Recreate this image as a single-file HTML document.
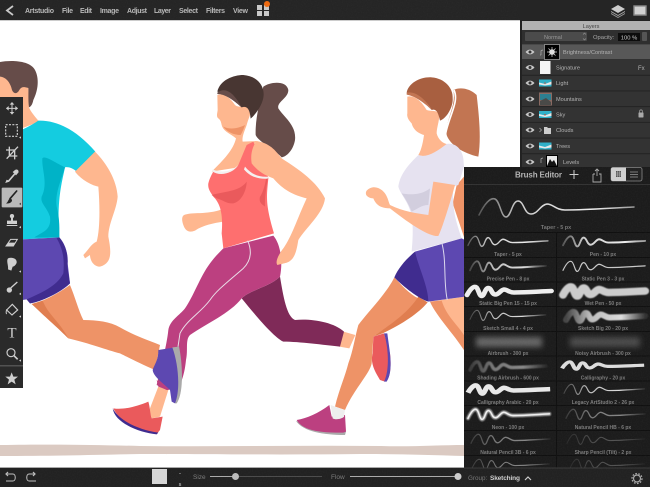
<!DOCTYPE html>
<html><head><meta charset="utf-8"><style>
html,body{margin:0;padding:0;background:#fff;width:650px;height:487px;overflow:hidden}
svg{display:block}
text{font-family:"Liberation Sans",sans-serif}
</style></head><body>
<svg width="650" height="487" viewBox="0 0 650 487" xmlns="http://www.w3.org/2000/svg">
<defs>
<filter id="noise" x="0" y="0" width="100%" height="100%"><feTurbulence type="fractalNoise" baseFrequency="0.8" numOctaves="2" seed="4"/><feColorMatrix values="0 0 0 0 1 0 0 0 0 1 0 0 0 0 1 0.5 0 0 0 -0.2"/></filter>
<filter id="b1" x="-10%" y="-60%" width="120%" height="220%"><feGaussianBlur stdDeviation="0.9"/></filter>
<filter id="b2" x="-20%" y="-150%" width="140%" height="400%"><feGaussianBlur stdDeviation="3"/></filter>
<linearGradient id="g1"><stop offset="0" stop-color="#555"/><stop offset=".25" stop-color="#ccc"/><stop offset=".75" stop-color="#eee"/><stop offset="1" stop-color="#999"/></linearGradient>
<linearGradient id="g2"><stop offset="0" stop-color="#444"/><stop offset=".3" stop-color="#bbb"/><stop offset=".7" stop-color="#ddd"/><stop offset="1" stop-color="#333"/></linearGradient>
<linearGradient id="g3"><stop offset="0" stop-color="#3a3a3a"/><stop offset=".3" stop-color="#777"/><stop offset=".7" stop-color="#888"/><stop offset="1" stop-color="#2a2a2a"/></linearGradient>
<linearGradient id="g4"><stop offset="0" stop-color="#2c2c2c"/><stop offset=".3" stop-color="#4c4c4c"/><stop offset=".7" stop-color="#555"/><stop offset="1" stop-color="#252525"/></linearGradient>
<path id="w" fill="none" stroke-linejoin="round" d="M0 6C5-4 11-12 16-10C21-8 22 8 27 8C32 8 33-8 39-8C45-8 45 5 52 5C59 5 61-4 68-5C74-5 77 1 86 1C111 1 131-1 155-2"/>
<g id="eye"><path d="M-4.5 0C-2 -3.2 2 -3.2 4.500 0C2 3.200-2 3.200-4.500 0Z" fill="#c8c8c8"/><circle r="1.500" fill="#333"/></g>
<g id="sky"><rect width="12.500" height="7" fill="#30b0c8"/><path d="M0 3L6 4.500L12.500 2V5L6 6L0 5Z" fill="#e8e8e8"/><path d="M5 3L7 3L6 5Z" fill="#b05a4a"/></g>
</defs>

<rect width="650" height="487" fill="#fff"/>

<!-- ground -->
<path d="M0 445C60 444 100 445 140 446C220 447 300 445 380 446C410 447 440 445 464 445V456C430 455 400 454 360 454C280 455 200 454 140 454C90 455 50 456 0 456Z" fill="#dbcac2"/>

<!-- Runner 1 -->
<g transform="translate(0 90) scale(.33333)">
<path d="M0-40L30-35L85-6L87 52C92 65 105 80 118 95L0 140Z" fill="#feb78f"/>
<path d="M0-84C30-90 90-90 105-60C118-35 115 0 100 30C97 45 92 50 87 52C84 30 86 5 85-6C70-10 65-10 58 0C50 15 40 10 36 0C34-10 25-38 0-40Z" fill="#664c49"/>
<path d="M0 135C40 135 80 115 115 92C170 90 230 120 286 185L230 245C218 234 205 230 195 232C185 280 170 330 178 442L0 452Z" fill="#14cce0"/>
<path d="M127 205C135 195 165 218 195 232C180 280 165 310 170 350C180 390 178 420 178 442L103 442C130 425 155 420 150 380C140 350 120 340 125 320C145 280 125 240 127 205Z" fill="#00b3c7"/>
<path d="M285 185C320 220 350 270 353 320C350 360 325 400 325 440C335 490 335 520 300 530C280 530 270 510 270 495L255 505L250 495C265 480 275 460 290 455C300 420 300 350 295 290C270 285 240 265 225 245Z" fill="#feb78f"/>
<path d="M95 642C130 635 175 610 210 585C225 620 235 660 250 690C290 690 330 695 360 712C400 735 430 745 480 765L465 840C420 820 380 800 360 790C320 780 270 760 205 745C180 720 150 690 95 642Z" fill="#ee9367"/>
<path d="M95 642L128 632C145 675 175 690 205 745C175 715 145 690 95 642Z" fill="#e07e50"/>
<path d="M0 452L178 442C195 460 205 490 203 520L210 580C180 610 130 630 90 640L80 628L0 640Z" fill="#5d48b1"/>
<path d="M170 445L178 442C200 470 205 500 202 530L210 580C175 610 125 635 90 640L80 628C120 610 170 590 190 550C195 500 185 470 170 445Z" fill="#402c8f"/>
</g>

<!-- Runner 2 -->
<g transform="translate(110 70) scale(.33333)">
<path d="M460 50C480 35 530 30 535 60C535 85 500 95 505 115C520 140 560 165 555 210C550 240 530 260 515 262C490 235 445 215 437 195C435 150 450 90 460 50Z" fill="#664c49"/>
<path d="M145 950L118 1020L125 1045L150 1040L175 960Z" fill="#feb78f"/>
<path d="M690 782L736 795L718 835L688 830Z" fill="#feb78f"/>
<path d="M510 620C520 680 530 740 555 750C600 745 670 755 702 785L690 830C640 825 570 815 520 815C490 800 440 740 395 685C420 660 480 650 510 620Z" fill="#7f2a58"/>
<path d="M222 435C245 425 290 435 335 418L340 455C310 460 280 465 255 482C235 490 225 480 220 465C215 450 215 440 222 435Z" fill="#feb78f"/>
<path d="M322 75C335 70 355 75 375 105C385 115 410 105 420 115C425 130 415 145 410 165C405 180 395 200 398 215L440 213C420 240 400 270 385 292L305 305C340 270 370 240 378 205C360 190 340 185 335 165C332 150 330 150 325 145C318 140 322 130 323 120Z" fill="#feb78f"/>
<path d="M340 170C360 180 385 175 405 165C400 180 395 190 392 195C370 195 350 185 340 170Z" fill="#ee9367"/>
<path d="M295 340C300 320 308 310 312 300C335 312 370 305 385 285L410 225L430 215L470 300L475 325C470 380 465 400 492 490L340 535L335 490C340 430 330 400 310 380C300 365 293 355 295 340Z" fill="#fe6f6f"/>
<path d="M305 375C340 365 390 365 410 335C410 360 395 395 370 400C350 402 340 390 320 385Z" fill="#ea5a5c"/>
<path d="M468 325C465 350 455 375 450 380C445 400 460 405 465 410C463 385 470 350 473 325Z" fill="#ea5a5c"/>
<path d="M308 298C335 310 365 305 385 285C370 310 330 320 308 305ZM405 290C425 315 450 322 475 320L473 326C445 328 420 320 402 298Z" fill="#f4f0f0"/>
<path d="M440 213C480 220 495 240 515 265C570 300 620 335 645 385C640 430 590 470 565 510C560 540 555 570 530 578L502 585C495 575 505 555 520 535C545 500 560 450 590 385C550 375 520 360 490 325C460 315 440 300 425 280C420 250 430 225 440 213Z" fill="#feb78f"/>
<path d="M340 535L490 497C510 520 520 570 510 620C480 650 420 660 395 685C360 730 290 760 240 795C225 810 235 840 228 870C225 900 220 920 210 945L170 960L140 945C150 900 170 830 175 780C180 750 210 735 225 715C250 680 270 620 300 580C315 560 330 545 340 535Z" fill="#bc4080"/>
<path d="M502 585C495 575 505 555 520 535L530 578Z" fill="#feb78f"/>
<path d="M413 512C425 540 425 570 400 595C360 630 320 660 300 690C270 730 230 750 210 790L204 830" fill="none" stroke="#eadfe8" stroke-width="3"/>
<path d="M322 65C330 30 370 15 400 15C440 18 462 45 461 75C460 100 440 130 422 146C420 125 415 105 395 112C370 90 345 70 322 65Z" fill="#483632"/>
<path d="M322 68C345 50 370 65 395 112C370 90 345 72 322 72Z" fill="#664c49"/>
<path d="M0 765C40 780 70 820 145 845L130 892C90 870 40 850 0 840Z" fill="#ee9367"/>
<path d="M145 840L195 832L212 920C215 960 210 990 195 1000L185 995L180 960C160 940 130 920 128 900C135 880 145 870 145 840Z" fill="#5d48b1"/>
<path d="M187 832L207 830C218 880 222 970 200 1000L195 1000C212 960 205 880 187 832Z" fill="#aaa"/>
<path d="M140 930C155 950 170 955 180 960L172 960L145 950Z" fill="#bc4080"/>
<path d="M10 1015C40 1020 80 1010 115 995C120 1010 120 1030 125 1045L158 1040L150 1080L140 1092C100 1085 30 1060 10 1015Z" fill="#ea5a5c"/>
<path d="M8 1015C30 1055 90 1080 145 1088L140 1093C90 1088 15 1060 8 1015Z" fill="#402c8f"/>
</g>

<!-- Runner 3 -->
<g transform="translate(290 70) scale(.33333)">
<path d="M490 60C510 50 540 55 560 75C565 120 575 200 565 260C520 250 480 225 470 195C465 150 500 110 490 60Z" fill="#c27552"/>
<path d="M522 320L500 345L488 400L515 480L525 510V320Z" fill="#ee9367"/>
<path d="M420 695L525 680V842C490 790 440 740 420 695Z" fill="#feb78f"/>
<path d="M455 692C470 740 500 760 525 800V845C490 790 440 740 420 695Z" fill="#ee9367"/>
<path d="M250 800L282 790L300 850C305 890 300 930 285 935L270 930C255 905 240 880 248 850Z" fill="#ea5a5c"/>
<path d="M282 790L292 790C298 840 312 900 290 935L282 935C300 900 295 830 282 790Z" fill="#5d48b1"/>
<path d="M313 622C290 670 230 730 205 765C195 800 190 840 175 880C165 920 145 965 135 1010L165 1020C190 960 240 910 245 880L250 800C290 770 350 740 385 685C355 670 335 645 313 622Z" fill="#ee9367"/>
<path d="M385 680L413 697C385 730 340 760 278 790L250 800C290 770 350 735 385 680Z" fill="#e07e50"/>
<path d="M352 80C375 75 395 95 410 120C425 125 440 120 447 130C450 150 440 170 440 190C445 210 460 220 470 222C450 250 410 265 385 255C395 240 400 210 402 195C385 190 370 180 365 160C355 150 350 140 352 130Z" fill="#feb78f"/>
<path d="M385 255C410 265 440 245 470 222C495 218 515 235 520 265L522 290L505 345L490 350C485 420 500 460 515 505L365 545C370 490 370 450 360 420C350 390 330 370 325 350C330 310 360 280 385 255Z" fill="#e6e2f0"/>
<path d="M335 370C360 375 395 375 420 355L415 405C395 405 385 415 365 425C355 400 345 385 335 370Z" fill="#d2cede"/>
<path d="M430 335L495 345C480 400 455 480 445 498C420 500 370 470 300 415C280 415 260 410 250 385C235 385 222 375 230 362C245 345 270 350 285 370C295 385 295 395 300 405C340 425 380 430 415 435C420 400 425 365 430 335Z" fill="#feb78f"/>
<path d="M375 545L515 505L525 510V680L415 695C405 650 370 590 375 545Z" fill="#5d48b1"/>
<path d="M375 545C345 570 325 595 313 622C340 650 385 685 415 695C415 650 385 590 375 545Z" fill="#402c8f"/>
<path d="M455 517C470 570 460 640 472 690" fill="none" stroke="#dcd8ee" stroke-width="3"/>
<path d="M492 60C508 95 478 135 467 190" fill="none" stroke="#fff" stroke-width="5"/>
<path d="M350 68C355 40 390 20 425 22C465 25 490 55 488 85C490 110 470 145 450 152C445 130 440 115 425 120C405 85 375 70 350 68Z" fill="#a85f40"/>
<path d="M350 68C375 62 405 85 425 120C405 100 375 78 350 74Z" fill="#c27552"/>
<path d="M18 1053C40 1085 100 1095 165 1095L168 1085L100 1075Z" fill="#aaa"/>
<path d="M20 1050C50 1045 85 1030 118 1005L125 1040L165 1035L168 1085L160 1088C100 1088 40 1085 20 1050Z" fill="#bc4080"/>
<path d="M122 1005L165 1020L162 1040C155 1048 135 1050 128 1045Z" fill="#eee"/>
</g>

<!-- Top bar -->
<rect width="650" height="20" fill="#252525"/>
<rect y="20" width="520" height="1" fill="#ccc"/>
<path d="M13 6L7 10.500L13 15" fill="none" stroke="#c8c8c8" stroke-width="1.800"/>
<g font-size="7" font-weight="bold" fill="#b8b8b8">
<text x="25" y="13" textLength="29">Artstudio</text>
<text x="62" y="13" textLength="11">File</text>
<text x="80" y="13" textLength="12">Edit</text>
<text x="100" y="13" textLength="19">Image</text>
<text x="127" y="13" textLength="20">Adjust</text>
<text x="154" y="13" textLength="17">Layer</text>
<text x="179" y="13" textLength="19">Select</text>
<text x="206" y="13" textLength="19">Filters</text>
<text x="233" y="13" textLength="15">View</text>
</g>
<g fill="#c8c8c8"><rect x="257" y="5" width="5" height="5"/><rect x="264" y="5" width="5" height="5"/><rect x="257" y="11" width="5" height="5"/><rect x="264" y="11" width="5" height="5"/></g>
<circle cx="267" cy="4" r="3" fill="#ee6a10"/>
<path d="M618 5L625 9L618 13L611 9Z" fill="#ccc"/><path d="M611 11L618 15L625 11V12L618 16L611 12Z" fill="#aaa"/><path d="M611 13L618 17L625 13V14L618 18L611 14Z" fill="#999"/>
<rect x="634" y="6" width="12" height="9" fill="#d0d0d0" stroke="#8a8a8a" stroke-width="1.400"/>

<!-- Right dark panel -->
<rect x="520" y="20" width="130" height="150" fill="#222"/>
<rect x="522" y="21" width="128" height="9" fill="#b2b2b2"/>
<text x="591" y="28" font-size="5.600" text-anchor="middle" fill="#444">Layers</text>
<rect x="522" y="30" width="128" height="14" fill="#2f2f2f"/>
<rect x="525" y="32" width="62" height="9" rx="1" fill="#4b4b4b"/>
<text x="553" y="39" font-size="5.600" text-anchor="middle" fill="#999">Normal</text>
<path d="M583 34.500L584.500 33L586 34.500M583 38.500L584.500 40L586 38.500" fill="none" stroke="#999" stroke-width=".6"/>
<text x="593" y="39" font-size="5.800" fill="#aaa">Opacity:</text>
<rect x="618" y="33" width="22" height="8" fill="#0c0c0c"/>
<text x="629" y="39.500" font-size="5.800" text-anchor="middle" fill="#ccc">100 %</text>
<rect x="642" y="32" width="5" height="9" rx="1" fill="#555"/>
<g fill="#333">
<rect x="522" y="60" width="128" height="14.800"/><rect x="522" y="75.700" width="128" height="14.800"/><rect x="522" y="91.400" width="128" height="14.800"/><rect x="522" y="107.100" width="128" height="14.800"/><rect x="522" y="122.800" width="128" height="14.800"/><rect x="522" y="138.500" width="128" height="14.800"/><rect x="522" y="154.200" width="128" height="14"/>
</g>
<rect x="522" y="44.300" width="128" height="15" fill="#585858"/>
<g><use href="#eye" x="530" y="52"/><use href="#eye" x="530" y="67.500"/><use href="#eye" x="530" y="83"/><use href="#eye" x="530" y="99"/><use href="#eye" x="530" y="114.500"/><use href="#eye" x="530" y="130"/><use href="#eye" x="530" y="146"/><use href="#eye" x="530" y="162"/></g>
<g font-size="5.600" fill="#b4b4b4">
<text x="563" y="54">Brightness/Contrast</text><text x="556" y="69.500">Signature</text><text x="556" y="85">Light</text><text x="556" y="101">Mountains</text><text x="556" y="116.500">Sky</text><text x="556" y="132">Clouds</text><text x="556" y="148">Trees</text><text x="563" y="164">Levels</text>
<text x="638" y="70" font-size="6">Fx</text>
</g>
<path d="M541 50.500V55M541 50.500L543 50M541 55H540" stroke="#aaa" stroke-width=".7" fill="none"/>
<rect x="544.500" y="44.500" width="15" height="15" fill="#000" stroke="#999" stroke-width=".8"/>
<circle cx="552" cy="52" r="2.800" fill="#ddd"/><path d="M552 47V57M547 52H557M548.500 48.500L555.500 55.500M555.500 48.500L548.500 55.500" stroke="#ddd" stroke-width=".7"/>
<rect x="540" y="61" width="10.500" height="13" fill="#f4f4f4"/>
<use href="#sky" x="539" y="79.500"/>
<rect x="539" y="92.500" width="13" height="13" fill="#8a6a62"/><rect x="540" y="94" width="11" height="6" fill="#2c7f90"/><path d="M540 101L546 98L551 102V105H540Z" fill="#4a4a48"/>
<use href="#sky" x="539" y="111"/>
<path d="M539 142.500h12.500v7h-12.500z" fill="#30b0c8"/><path d="M539 145.500L545 147L551.500 144.500V147.500L545 148.500L539 147.500Z" fill="#e8e8e8"/>
<path d="M539.500 128L541.500 130L539.500 132" fill="none" stroke="#aaa" stroke-width=".7"/>
<path d="M544 127H547L548 128H551V134H544Z" fill="#ccc"/>
<rect x="638.500" y="112.500" width="5" height="5" rx=".6" fill="#aaa"/><path d="M639.700 112.500V111C639.700 109.500 642.300 109.500 642.300 111V112.500" fill="none" stroke="#aaa" stroke-width=".7"/>
<path d="M541 158.500V163M541 158.500L543 158" stroke="#aaa" stroke-width=".7" fill="none"/>
<rect x="546" y="155" width="12" height="12" fill="#000"/><rect x="547" y="156" width="10" height="10" fill="#e8e8e8"/><path d="M547 166L550 159L552 162L554 160L557 166Z" fill="#111"/>

<!-- Left toolbar -->
<rect x="0" y="97" width="23" height="291" fill="#2a2a2a"/>
<g transform="translate(0 90) scale(.33333)" fill="none" stroke="#cfcfcf" stroke-width="3">
<path d="M36 38V72M19 55H53"/>
<path d="M29 44L36 36L43 44ZM29 66L36 74L43 66ZM26 48L18 55L26 62ZM46 48L54 55L46 62Z" fill="#cfcfcf" stroke="none"/>
<rect x="17" y="104" width="35" height="35" stroke-dasharray="6 4" stroke-width="3.500"/>
<path d="M57 143L63 139L63 146Z" fill="#cfcfcf" stroke="none"/>
<path d="M28 170V198H52M18 180H44V208M20 206L54 170" stroke-width="4"/>
<path d="M22 270L20 275L26 273L44 252" stroke-width="5"/>
<path d="M38 246L48 256L55 248C58 240 50 236 45 240Z" fill="#cfcfcf" stroke="none"/>
<rect x="5" y="293" width="62" height="59" rx="3" fill="#b9b9b9" stroke="none"/>
<path d="M50 303L30 326" stroke="#222" stroke-width="5" stroke-linecap="round"/>
<path d="M18 340C24 338 24 328 30 326C36 326 38 332 34 336C30 340 24 341 18 340Z" fill="#222" stroke="none"/>
<path d="M57 342L63 338L63 345Z" fill="#444" stroke="none"/>
<path d="M36 372C28 372 28 382 33 384V392H21V402H51V392H39V384C44 382 44 372 36 372Z" fill="#cfcfcf" stroke="none"/>
<rect x="20" y="405" width="32" height="3" fill="#cfcfcf" stroke="none"/>
<path d="M18 468L32 448H52L40 468Z" fill="none" stroke-width="3"/><path d="M18 468L26 458H46L40 468Z" fill="#cfcfcf" stroke="none"/>
<path d="M24 505C35 500 52 505 50 518C48 525 42 530 38 530L34 542L24 538C26 528 18 512 24 505Z" fill="#cfcfcf" stroke="none"/>
<circle cx="28" cy="600" r="8" fill="#cfcfcf" stroke="none"/><path d="M32 594L52 576" stroke-width="4"/>
<path d="M20 660L37 643L53 660L36 675Z" stroke-width="3.500"/><path d="M20 658C18 665 18 670 20 672" stroke-width="3"/>
<path d="M57 545L63 541L63 548ZM57 612L63 608L63 615ZM57 680L63 676L63 683ZM57 412L63 408L63 415ZM57 812L63 808L63 815Z" fill="#cfcfcf" stroke="none"/>
<circle cx="33" cy="788" r="12" stroke-width="3.500"/><path d="M42 797L53 808" stroke-width="5"/>
<rect x="0" y="826" width="69" height="3" fill="#666" stroke="none"/>
<path d="M35 847L40 860L54 860L43 869L47 883L35 875L23 883L27 869L16 860L30 860Z" fill="#cfcfcf" stroke="none"/>
</g>
<text x="12" y="337.500" font-size="15" text-anchor="middle" fill="#cfcfcf" style="font-family:'Liberation Serif',serif">T</text>

<!-- Bottom bar -->
<rect y="467" width="650" height="20" fill="#222"/>
<rect y="467" width="464" height="1" fill="#aaa"/>
<g fill="none" stroke="#c0c0c0" stroke-width="1">
<path d="M7 474H13C16 474 16 481 13 481H6"/><path d="M8 472L6 474L8 476" stroke-width="1.200"/>
<path d="M35 474H29C26 474 26 481 29 481H36"/><path d="M33 472L35 474L33 476" stroke-width="1.200"/>
</g>
<rect x="152" y="469" width="15" height="15" fill="#d6d6d6"/>
<rect x="179.500" y="473" width="1" height="1" fill="#aaa"/>
<text x="180" y="486" font-size="5" font-weight="bold" text-anchor="middle" fill="#aaa">s</text>
<text x="193" y="479" font-size="6.500" fill="#7c7c7c">Size</text>
<rect x="210" y="476" width="25" height="1" fill="#aaa"/><rect x="235" y="476" width="87" height="1" fill="#4c4c4c"/>
<circle cx="235.500" cy="476.500" r="3.500" fill="#bbb"/>
<text x="331" y="479" font-size="6.500" fill="#7c7c7c">Flow</text>
<rect x="350" y="476" width="108" height="1" fill="#aaa"/>
<circle cx="458" cy="476.500" r="3.500" fill="#ccc"/>

<!-- Brush editor -->
<rect x="464" y="167" width="186" height="320" fill="#1c1c1c"/>
<text x="515" y="177.500" font-size="8" font-weight="bold" fill="#b4b4b4" textLength="47">Brush Editor</text>
<path d="M574 170V179M569.500 174.500H578.500" stroke="#ccc" stroke-width="1"/>
<path d="M593 174H595M599 174H601V182H593V174M597 176V169M595 171L597 169L599 171" fill="none" stroke="#aaa" stroke-width=".9"/>
<rect x="611" y="167.500" width="31" height="13.500" rx="2" fill="#222" stroke="#888" stroke-width=".8"/>
<path d="M613 167.500H626V181H613A2 2 0 0 1 611 179V169.500A2 2 0 0 1 613 167.500Z" fill="#cfcfcf"/>
<g fill="#555"><rect x="616" y="171" width="5" height="6"/></g>
<path d="M617.500 171V177M619.500 171V177M616 173H621M616 175H621" stroke="#cfcfcf" stroke-width=".4"/>
<path d="M630 172H638M630 174.500H638M630 177H638" stroke="#999" stroke-width=".8"/>
<rect x="464" y="184" width="186" height="1" fill="#333"/>
<g stroke="#101010" stroke-width="1">
<path d="M464 232.500H650M464 257.500H650M464 282H650M464 306.500H650M464 331.500H650M464 356H650M464 381H650M464 405.500H650M464 430.500H650M464 455.500H650"/>
<path d="M556.500 232V468"/>
</g>

<g stroke-linecap="round">
<use href="#w" transform="translate(479 209)" stroke="url(#g1)" stroke-width="1.500"/>
<g transform="translate(468 242) scale(.516 .55)"><use href="#w" stroke="url(#g1)" stroke-width="2.600"/></g>
<g transform="translate(563 242) scale(.53 .55)"><use href="#w" stroke="url(#g1)" stroke-width="3.500"/></g>
<g transform="translate(470 267) scale(.49 .55)"><use href="#w" stroke="url(#g2)" stroke-width="3.500"/></g>
<g transform="translate(563 267) scale(.53 .55)"><use href="#w" stroke="#c8c8c8" stroke-width="2.200"/></g>
<g transform="translate(467 292) scale(.545 .5)"><use href="#w" stroke="#eee" stroke-width="9"/></g>
<g transform="translate(563 292) scale(.53 .5)" filter="url(#b1)"><use href="#w" stroke="#ccc" stroke-width="15"/></g>
<g transform="translate(470 316) scale(.49 .55)"><use href="#w" stroke="url(#g2)" stroke-width="2.200"/></g>
<g transform="translate(566 317) scale(.51 .5)" filter="url(#b1)"><use href="#w" stroke="url(#g2)" stroke-width="12"/></g>
<g transform="translate(470 367) scale(.49 .5)" filter="url(#b1)"><use href="#w" stroke="url(#g3)" stroke-width="7"/></g>
<g transform="translate(562 366) scale(.53 .4)"><use href="#w" stroke="#ddd" stroke-width="8" stroke-linecap="butt"/></g>
<g transform="translate(468 390) scale(.53 .45)"><use href="#w" stroke="#e8e8e8" stroke-width="10" stroke-linecap="butt"/></g>
<g transform="translate(564 390) scale(.52 .55)"><use href="#w" stroke="url(#g2)" stroke-width="2.200"/></g>
<g transform="translate(468 415) scale(.525 .55)" filter="url(#b1)"><use href="#w" stroke="#999" stroke-width="7"/></g>
<g transform="translate(468 415) scale(.525 .55)"><use href="#w" stroke="#eee" stroke-width="2.800"/></g>
<g transform="translate(566 415) scale(.51 .55)"><use href="#w" stroke="url(#g3)" stroke-width="2.500"/></g>
<g transform="translate(471 440) scale(.51 .55)"><use href="#w" stroke="url(#g3)" stroke-width="2.500"/></g>
<g transform="translate(567 440) scale(.5 .55)"><use href="#w" stroke="url(#g4)" stroke-width="2"/></g>
<g transform="translate(472 465) scale(.5 .55)"><use href="#w" stroke="url(#g3)" stroke-width="2"/></g>
<g transform="translate(570 465) scale(.48 .55)"><use href="#w" stroke="url(#g4)" stroke-width="2"/></g>
</g>
<text x="556" y="229" font-size="5.500" font-weight="bold" text-anchor="middle" fill="#777">Taper - 5 px</text>
<rect x="476" y="337" width="66" height="10" fill="#666" filter="url(#b2)"/>
<rect x="570" y="337" width="70" height="10" fill="#4c4c4c" filter="url(#b2)"/>

<g font-size="5" font-weight="bold" fill="#7c7c7c" text-anchor="middle">
<text x="508" y="256">Taper - 5 px</text><text x="603" y="256">Pen - 10 px</text>
<text x="508" y="280.500">Precise Pen - 8 px</text><text x="603" y="280.500">Static Pen 3 - 3 px</text>
<text x="508" y="305">Static Big Pen 15 - 15 px</text><text x="603" y="305">Wet Pen - 50 px</text>
<text x="508" y="330">Sketch Small 4 - 4 px</text><text x="603" y="330">Sketch Big 20 - 20 px</text>
<text x="508" y="355">Airbrush - 300 px</text><text x="603" y="355">Noisy Airbrush - 300 px</text>
<text x="508" y="379.500">Shading Airbrush - 600 px</text><text x="603" y="379.500">Calligraphy - 20 px</text>
<text x="508" y="404">Calligraphy Arabic - 20 px</text><text x="603" y="404">Legacy ArtStudio 2 - 26 px</text>
<text x="508" y="429">Neon - 100 px</text><text x="603" y="429">Natural Pencil HB - 6 px</text>
<text x="508" y="454">Natural Pencil 3B - 6 px</text><text x="603" y="454">Sharp Pencil (Tilt) - 2 px</text>
</g>

<rect x="464" y="468" width="186" height="19" fill="#222"/>
<rect x="464" y="467.500" width="186" height="1" fill="#3a3a3a"/>
<text x="468" y="480" font-size="6.300" fill="#777">Group:</text>
<text x="490" y="480" font-size="6.500" font-weight="bold" fill="#d0d0d0" textLength="30">Sketching</text>
<path d="M525 480L528 477L531 480" fill="none" stroke="#ccc" stroke-width="1.200"/>
<circle cx="637" cy="478.500" r="3.500" fill="none" stroke="#aaa" stroke-width="1.200"/>
<circle cx="637" cy="478.500" r="5" fill="none" stroke="#aaa" stroke-width="1.300" stroke-dasharray="1.600 1.500"/>

<!-- subtle noise -->
<rect x="464" y="167" width="186" height="320" filter="url(#noise)" opacity=".12"/>
<rect width="520" height="20" filter="url(#noise)" opacity=".1"/>
<rect x="23" y="468" width="441" height="19" filter="url(#noise)" opacity=".1"/>
</svg>
</body></html>
